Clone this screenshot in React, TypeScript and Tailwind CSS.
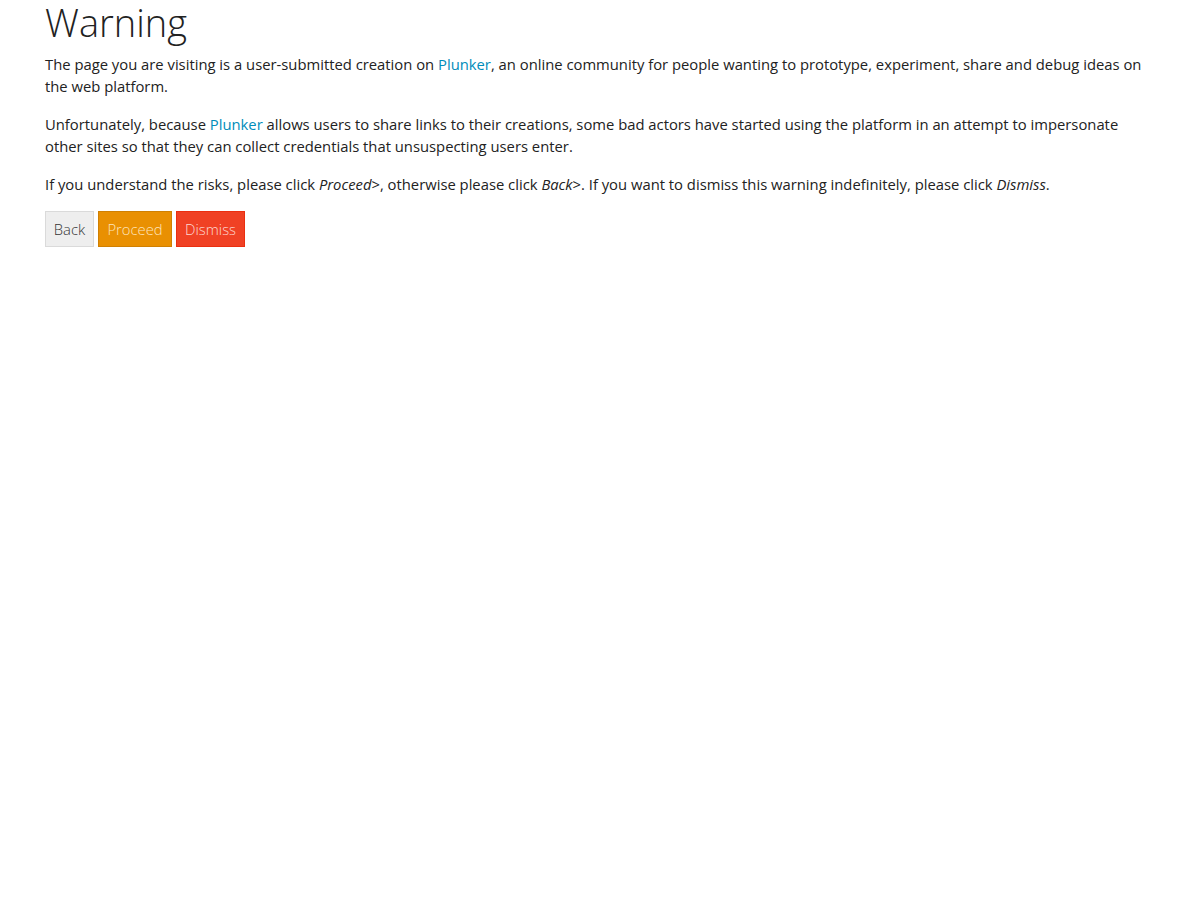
import React from "react";

export default function App() {
  return (
    <div className="min-h-screen bg-white text-[#222222]" style={{ fontFamily: '"Open Sans", "Liberation Sans", sans-serif' }}>
      <div className="mx-auto w-[1140px] px-[15px]">
        <h1 className="m-0 text-[38px] leading-[44px] font-light mb-[9px] text-[#222222]">Warning</h1>
        <p className="text-[14.8px] leading-[22px] mb-4">
          The page you are visiting is a user-submitted creation on{" "}
          <a href="#" className="text-[#008cba]">Plunker</a>, an online community for people wanting to prototype, experiment, share and debug ideas on the web platform.
        </p>
        <p className="text-[14.8px] leading-[22px] mb-4">
          Unfortunately, because <a href="#" className="text-[#008cba]">Plunker</a> allows users to share links to their creations, some bad actors have started using the platform in an attempt to impersonate other sites so that they can collect credentials that unsuspecting users enter.
        </p>
        <p className="text-[14.8px] leading-[22px] mb-4">
          If you understand the risks, please click <em>Proceed</em>&gt;, otherwise please click <em>Back</em>&gt;. If you want to dismiss this warning indefinitely, please click <em>Dismiss</em>.
        </p>
        <div className="flex gap-[4px]">
          <button className="h-[36px] w-[49px] border border-[#dadada] bg-[#eeeeee] text-[#333333] text-[14.8px] font-light leading-[22px]">Back</button>
          <button className="h-[36px] w-[74px] border border-[#d08002] bg-[#e99002] text-[#fde4bd] text-[14.8px] font-light leading-[22px]">Proceed</button>
          <button className="h-[36px] w-[69px] border border-[#ea2f10] bg-[#f04124] text-[#fdd8d2] text-[14.8px] font-light leading-[22px]">Dismiss</button>
        </div>
      </div>
    </div>
  );
}
